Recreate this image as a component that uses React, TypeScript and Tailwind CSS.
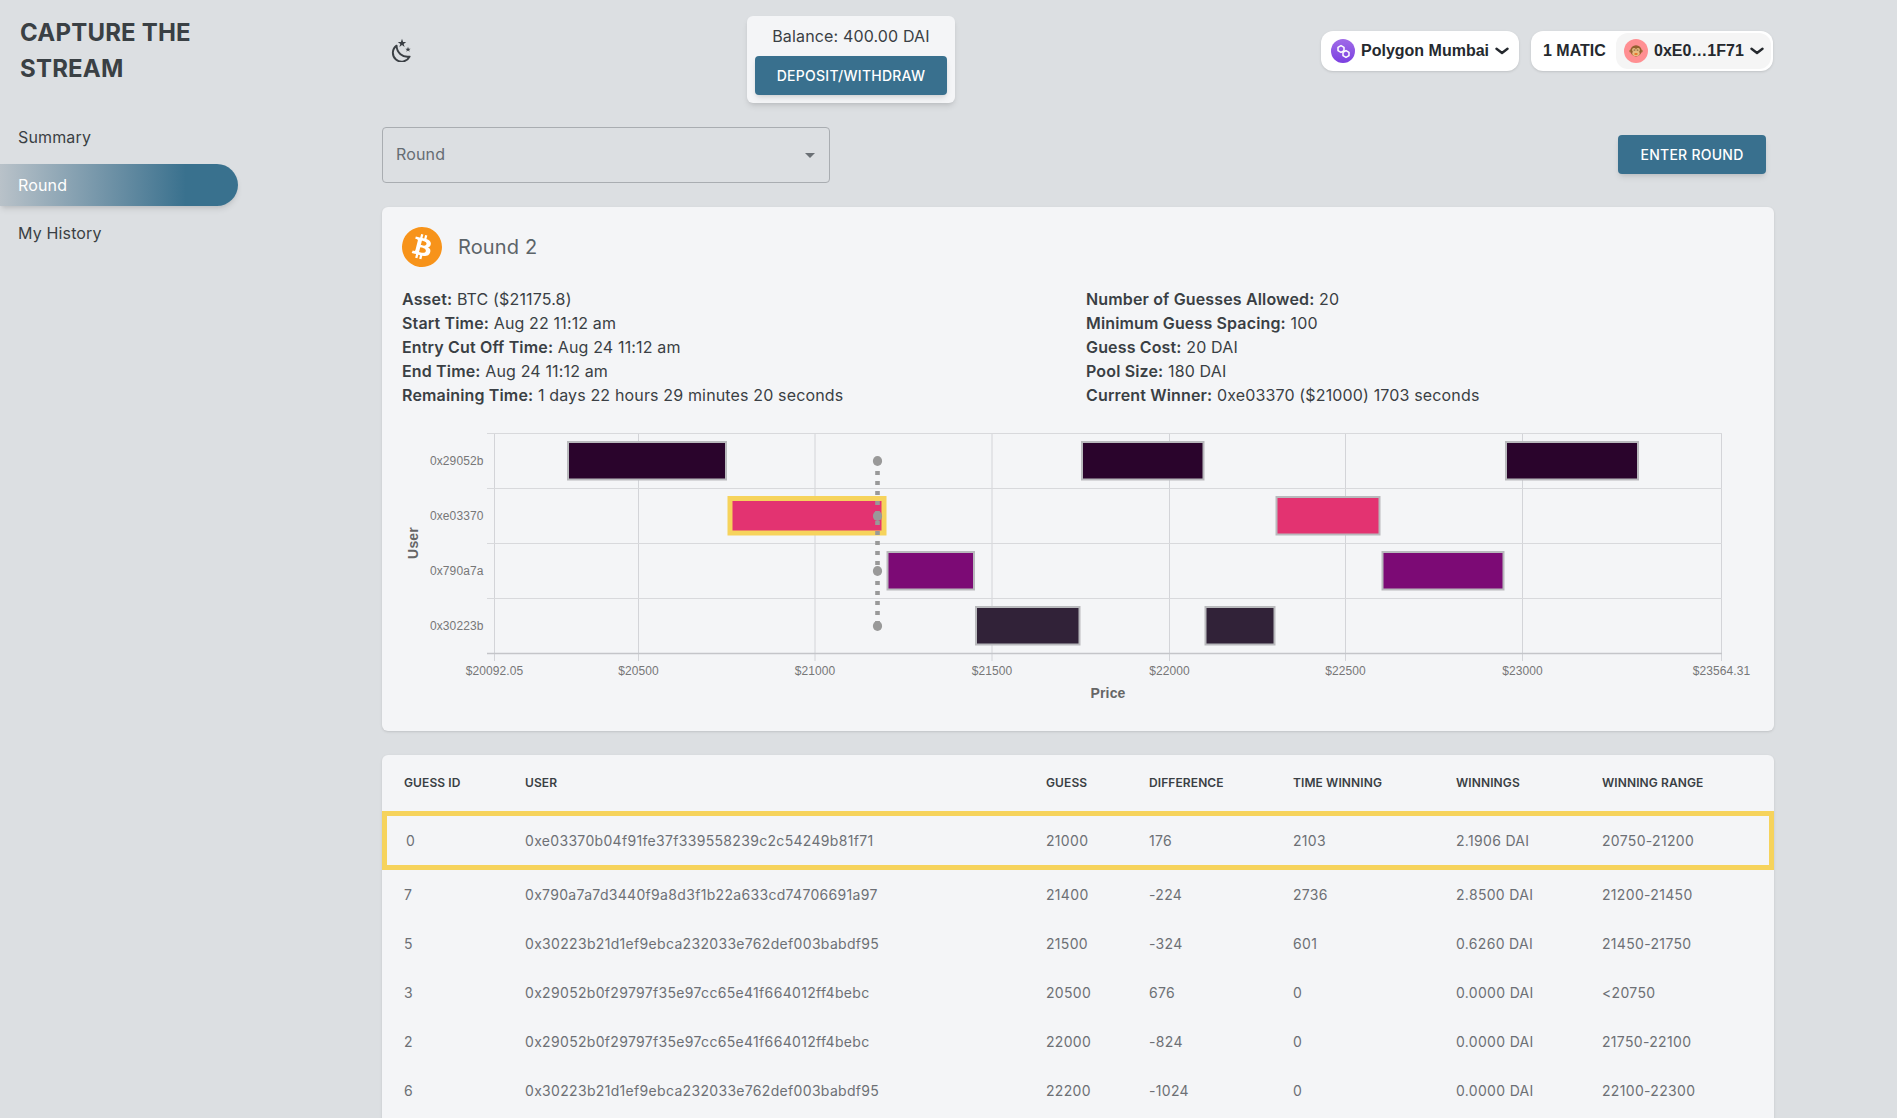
import React from 'react';
import { SiBitcoin } from 'react-icons/si';

const xTicks = [
  { x: 494.5, label: '$20092.05' },
  { x: 638.5, label: '$20500' },
  { x: 815, label: '$21000' },
  { x: 992, label: '$21500' },
  { x: 1169.5, label: '$22000' },
  { x: 1345.5, label: '$22500' },
  { x: 1522.5, label: '$23000' },
  { x: 1721.5, label: '$23564.31' },
];

const yRows = [
  { y: 461, label: '0x29052b' },
  { y: 516, label: '0xe03370' },
  { y: 571, label: '0x790a7a' },
  { y: 626, label: '0x30223b' },
];

const bars = [
  { x1: 567, x2: 727, row: 0, fill: '#2a042c' },
  { x1: 1081, x2: 1204.5, row: 0, fill: '#2a042c' },
  { x1: 1505, x2: 1639, row: 0, fill: '#2a042c' },
  { x1: 1275.5, x2: 1380.5, row: 1, fill: '#e33371' },
  { x1: 886.5, x2: 975, row: 2, fill: '#7c0a75' },
  { x1: 1381.5, x2: 1504.5, row: 2, fill: '#7c0a75' },
  { x1: 975, x2: 1080.5, row: 3, fill: '#312238' },
  { x1: 1204.5, x2: 1275.5, row: 3, fill: '#312238' },
];

const rows = [
  ['7', '0x790a7a7d3440f9a8d3f1b22a633cd74706691a97', '21400', '-224', '2736', '2.8500 DAI', '21200-21450'],
  ['5', '0x30223b21d1ef9ebca232033e762def003babdf95', '21500', '-324', '601', '0.6260 DAI', '21450-21750'],
  ['3', '0x29052b0f29797f35e97cc65e41f664012ff4bebc', '20500', '676', '0', '0.0000 DAI', '<20750'],
  ['2', '0x29052b0f29797f35e97cc65e41f664012ff4bebc', '22000', '-824', '0', '0.0000 DAI', '21750-22100'],
  ['6', '0x30223b21d1ef9ebca232033e762def003babdf95', '22200', '-1024', '0', '0.0000 DAI', '22100-22300'],
];

const winner = ['0', '0xe03370b04f91fe37f339558239c2c54249b81f71', '21000', '176', '2103', '2.1906 DAI', '20750-21200'];

const headers = ['Guess ID', 'User', 'Guess', 'Difference', 'Time Winning', 'Winnings', 'Winning Range'];

const colWidths = ['w-[121px]', 'w-[521px]', 'w-[103px]', 'w-[144px]', 'w-[163px]', 'w-[146px]', 'w-[194px]'];

const Info = ({ label, value }: { label: string; value: string }) => (
  <div className="h-6 leading-6">
    <span className="font-semibold">{label}:</span> {value}
  </div>
);

const Chevron = () => (
  <svg width="14" height="8" viewBox="0 0 14 8" fill="none">
    <path d="M1.5 1.8 L7 6 L12.5 1.8" stroke="#25292e" strokeWidth="2.4" strokeLinecap="round" strokeLinejoin="round" />
  </svg>
);

const MoonIcon = () => (
  <svg width="24" height="24" viewBox="0 0 24 24" className="ml-[6px] mt-[22px] shrink-0" fill="none">
    <path d="M8.6 7.6 A8.8 8.8 0 1 0 21.6 18.6 A11 11 0 0 1 8.6 7.6 Z" stroke="#3a3f44" strokeWidth="1.9" strokeLinejoin="round" />
    <path d="M14 0.8 L15.1 3.9 L18.2 3.9 L15.7 5.9 L16.6 9 L14 7.1 L11.4 9 L12.3 5.9 L9.8 3.9 L12.9 3.9 Z" fill="#3a3f44" />
    <path d="M20 8.8 L20.7 10.7 L22.6 10.7 L21.1 11.9 L21.7 13.8 L20 12.6 L18.3 13.8 L18.9 11.9 L17.4 10.7 L19.3 10.7 Z" fill="#3a3f44" />
  </svg>
);

const PolygonIcon = () => (
  <div className="flex h-6 w-6 items-center justify-center rounded-full bg-gradient-to-b from-[#a06ae8] to-[#7c3fe0]">
    <svg width="17" height="17" viewBox="0 0 17 17" fill="none" stroke="#fff" strokeWidth="1.5" strokeLinejoin="round">
      <path d="M6 2.6 L9 4.3 V7.7 L6 9.4 L3 7.7 V4.3 Z" />
      <path d="M11 7.6 L14 9.3 V12.7 L11 14.4 L8 12.7 V9.3 Z" />
    </svg>
  </div>
);

const MonkeyAvatar = () => (
  <div className="flex h-6 w-6 items-center justify-center rounded-full bg-[#ff8f92]">
    <svg width="14" height="14" viewBox="0 0 14 14">
      <circle cx="1.8" cy="7" r="1.6" fill="#a9743f" />
      <circle cx="12.2" cy="7" r="1.6" fill="#a9743f" />
      <circle cx="7" cy="6.8" r="5.6" fill="#94602f" />
      <ellipse cx="5" cy="6" rx="1.9" ry="2" fill="#e8bd82" />
      <ellipse cx="9" cy="6" rx="1.9" ry="2" fill="#e8bd82" />
      <ellipse cx="7" cy="9.4" rx="3.7" ry="2.6" fill="#e8bd82" />
      <circle cx="5.2" cy="6" r="0.6" fill="#2d1c10" />
      <circle cx="8.8" cy="6" r="0.6" fill="#2d1c10" />
      <ellipse cx="7" cy="10" rx="1.8" ry="1" fill="#e8752a" />
    </svg>
  </div>
);

const PriceChart = () => (
  <svg width="1352" height="290" viewBox="402 420 1352 290" className="mt-[13px] block font-['Liberation_Sans',sans-serif]">
    {xTicks.map(t => (
      <line key={t.x} x1={t.x} x2={t.x} y1={433.5} y2={661} stroke="#d3d4d8" />
    ))}
    {[433.5, 488.5, 543.5, 598.5].map(y => (
      <line key={y} x1={487} x2={1722} y1={y} y2={y} stroke="#d8d9dc" />
    ))}
    <line x1={487} x2={1722} y1={653.5} y2={653.5} stroke="#c4c5c9" strokeWidth="1.5" />
    {bars.map(b => (
      <rect
        key={b.x1}
        x={b.x1 + 1}
        y={441 + b.row * 55 + 1}
        width={b.x2 - b.x1 - 2}
        height={37.5}
        fill={b.fill}
        stroke="#b9babd"
        strokeWidth="2"
      />
    ))}
    <rect x={730} y={498.5} width={154} height={34.5} fill="#e33371" stroke="#f6d35c" strokeWidth="5" />
    <line x1={877.5} x2={877.5} y1={471} y2={622} stroke="#999" strokeWidth="4.6" strokeDasharray="4 6" />
    {yRows.map(r => (
      <ellipse key={r.y} cx={877.5} cy={r.y} rx={4.6} ry={5} fill="#999" />
    ))}
    {yRows.map(r => (
      <text key={r.label} x={483.5} y={r.y + 3.5} textAnchor="end" fontSize="12" letterSpacing="0.1" fill="#777">
        {r.label}
      </text>
    ))}
    {xTicks.map(t => (
      <text key={t.label} x={t.x} y={675} textAnchor="middle" fontSize="12" letterSpacing="0.1" fill="#777">
        {t.label}
      </text>
    ))}
    <text x={1108} y={698} textAnchor="middle" fontSize="14" fontWeight="700" fill="#666">
      Price
    </text>
    <text transform="rotate(-90 418 543)" x={418} y={543} textAnchor="middle" fontSize="14" fontWeight="700" fill="#666">
      User
    </text>
  </svg>
);

const App = () => {
  return (
    <div className="flex h-screen overflow-hidden bg-[#dcdfe2] font-['Inter',sans-serif] tracking-[0.15px] text-[#3a3f44]">
      <aside className="w-[382px] shrink-0">
        <h1 className="w-[220px] pl-5 pt-[15px] text-2xl leading-9 font-bold tracking-[0.2px] text-[#3a4044]">CAPTURE THE STREAM</h1>
        <nav className="mt-[29px] flex w-[238px] flex-col gap-[6px] text-base">
          <a className="flex h-[42px] items-center pl-[18px]">Summary</a>
          <a className="flex h-[42px] items-center rounded-r-[21px] bg-gradient-to-r from-[#b9c2c9] to-[#39718e] to-[78%] pl-[18px] text-white shadow-md">
            Round
          </a>
          <a className="flex h-[42px] items-center pl-[18px]">My History</a>
        </nav>
      </aside>

      <main className="w-[1392px] shrink-0">
        <header className="flex items-start pt-4">
          <MoonIcon />
          <div className="ml-[335px] flex h-[87px] w-[208px] flex-col items-center rounded-md bg-[#f4f5f7] px-2 shadow-md">
            <div className="mt-2 h-6 leading-6">Balance: 400.00 DAI</div>
            <button className="mt-2 h-[39px] w-full rounded bg-[#39708e] text-sm font-medium tracking-[0.25px] text-white shadow-md">DEPOSIT/WITHDRAW</button>
          </div>
          <div className="ml-auto mr-px mt-[15px] flex gap-3 font-['Liberation_Sans',sans-serif] text-base font-bold tracking-normal text-[#25292e]">
            <div className="flex h-10 w-[198px] items-center gap-[6px] rounded-xl bg-white pl-[10px] shadow-sm">
              <PolygonIcon />
              <span>Polygon Mumbai</span>
              <Chevron />
            </div>
            <div className="flex h-10 w-[242px] items-center rounded-xl bg-white shadow-sm">
              <span className="ml-3 w-[73px]">1 MATIC</span>
              <div className="flex h-9 w-[155px] items-center gap-[6px] rounded-xl bg-[#f5f5f5] pl-2">
                <MonkeyAvatar />
                <span>0xE0…1F71</span>
                <Chevron />
              </div>
            </div>
          </div>
        </header>

        <div className="mt-6 flex items-start justify-between pr-2">
          <div className="flex h-14 w-[448px] items-center justify-between rounded border border-[#a9adb1] pb-[2px] pl-[13px] pr-[14px] text-[#666d73]">
            <span>Round</span>
            <span className="mt-[2px] h-0 w-0 border-x-[5px] border-t-[5px] border-x-transparent border-t-[#6b7075]" />
          </div>
          <button className="mt-2 h-[39px] w-[148px] rounded bg-[#39708e] text-sm font-medium tracking-[0.25px] text-white shadow-md">ENTER ROUND</button>
        </div>

        <section className="mt-6 h-[524px] rounded-md bg-[#f4f5f7] px-5 pt-5 shadow-sm">
          <div className="flex h-10 items-center gap-[16px]">
            <div className="h-10 w-10 rounded-full bg-white">
              <SiBitcoin className="text-[40px] text-[#f7931a]" />
            </div>
            <h2 className="text-xl text-[#5c6469]">Round 2</h2>
          </div>
          <div className="mt-5 grid grid-cols-[684px_1fr]">
            <div>
              <Info label="Asset" value="BTC ($21175.8)" />
              <Info label="Start Time" value="Aug 22 11:12 am" />
              <Info label="Entry Cut Off Time" value="Aug 24 11:12 am" />
              <Info label="End Time" value="Aug 24 11:12 am" />
              <Info label="Remaining Time" value="1 days 22 hours 29 minutes 20 seconds" />
            </div>
            <div>
              <Info label="Number of Guesses Allowed" value="20" />
              <Info label="Minimum Guess Spacing" value="100" />
              <Info label="Guess Cost" value="20 DAI" />
              <Info label="Pool Size" value="180 DAI" />
              <Info label="Current Winner" value="0xe03370 ($21000) 1703 seconds" />
            </div>
          </div>
          <PriceChart />
        </section>

        <section className="mt-6 rounded-t-md bg-[#f4f5f7] pb-10 shadow-sm">
          <table className="w-full table-fixed border-separate border-spacing-0 text-left text-sm tracking-[0.32px] text-[#6d7075]">
            <thead>
              <tr className="h-14">
                {headers.map((h, i) => (
                  <th key={h} className={`${colWidths[i]} pl-[22px] text-xs font-semibold tracking-[0.1px] uppercase text-[#3a3f44]`}>
                    {h}
                  </th>
                ))}
              </tr>
            </thead>
            <tbody>
              <tr className="h-[59px]">
                {winner.map((cell, i) => (
                  <td
                    key={i}
                    className={
                      i === 0
                        ? 'border-y-[5px] border-l-[5px] border-[#f6d35c] pl-[19px]'
                        : i === 6
                          ? 'border-y-[5px] border-r-[5px] border-[#f6d35c] pl-[22px]'
                          : 'border-y-[5px] border-[#f6d35c] pl-[22px]'
                    }
                  >
                    {cell}
                  </td>
                ))}
              </tr>
              {rows.map(row => (
                <tr key={row[0]} className="h-[49px]">
                  {row.map((cell, i) => (
                    <td key={i} className="pl-[22px]">
                      {cell}
                    </td>
                  ))}
                </tr>
              ))}
            </tbody>
          </table>
        </section>
      </main>
    </div>
  );
};

export default App;
